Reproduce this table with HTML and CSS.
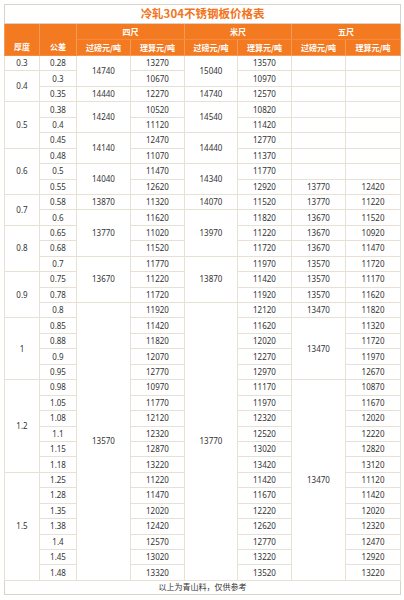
FILE: index.html
```html
<!DOCTYPE html>
<html lang="zh">
<head>
<meta charset="utf-8">
<title>冷轧304不锈钢板价格表</title>
<link rel="stylesheet" href="styles.css">
</head>
<body>
<table class="price">
<colgroup>
<col class="c-thick"><col class="c-tol"><col class="c-p"><col class="c-p"><col class="c-p2"><col class="c-p"><col class="c-p"><col class="c-p3">
</colgroup>
<thead>
<tr class="title-row"><th colspan="8" class="title">冷轧304不锈钢板价格表</th></tr>
<tr class="h1">
<th rowspan="2" class="hl">厚度</th><th rowspan="2" class="hl">公差</th>
<th colspan="2">四尺</th><th colspan="2">米尺</th><th colspan="2">五尺</th>
</tr>
<tr class="h2">
<th>过磅元/吨</th><th>理算元/吨</th><th>过磅元/吨</th><th>理算元/吨</th><th>过磅元/吨</th><th>理算元/吨</th>
</tr>
</thead>
<tbody>
<tr><td>0.3</td><td>0.28</td><td rowspan="2">14740</td><td>13270</td><td rowspan="2">15040</td><td>13570</td><td></td><td></td></tr>
<tr><td rowspan="2">0.4</td><td>0.3</td><td>10670</td><td>10970</td><td></td><td></td></tr>
<tr><td>0.35</td><td>14440</td><td>12270</td><td>14740</td><td>12570</td><td></td><td></td></tr>
<tr><td rowspan="3">0.5</td><td>0.38</td><td rowspan="2">14240</td><td>10520</td><td rowspan="2">14540</td><td>10820</td><td></td><td></td></tr>
<tr><td>0.4</td><td>11120</td><td>11420</td><td></td><td></td></tr>
<tr><td>0.45</td><td rowspan="2">14140</td><td>12470</td><td rowspan="2">14440</td><td>12770</td><td></td><td></td></tr>
<tr><td rowspan="3">0.6</td><td>0.48</td><td>11070</td><td>11370</td><td></td><td></td></tr>
<tr><td>0.5</td><td rowspan="2">14040</td><td>11470</td><td rowspan="2">14340</td><td>11770</td><td></td><td></td></tr>
<tr><td>0.55</td><td>12620</td><td>12920</td><td>13770</td><td>12420</td></tr>
<tr><td rowspan="2">0.7</td><td>0.58</td><td>13870</td><td>11320</td><td>14070</td><td>11520</td><td>13770</td><td>11220</td></tr>
<tr><td>0.6</td><td rowspan="3">13770</td><td>11620</td><td rowspan="3">13970</td><td>11820</td><td>13670</td><td>11520</td></tr>
<tr><td rowspan="3">0.8</td><td>0.65</td><td>11020</td><td>11220</td><td>13670</td><td>10920</td></tr>
<tr><td>0.68</td><td>11520</td><td>11720</td><td>13670</td><td>11470</td></tr>
<tr><td>0.7</td><td rowspan="3">13670</td><td>11770</td><td rowspan="3">13870</td><td>11970</td><td>13570</td><td>11720</td></tr>
<tr><td rowspan="3">0.9</td><td>0.75</td><td>11220</td><td>11420</td><td>13570</td><td>11170</td></tr>
<tr><td>0.78</td><td>11720</td><td>11920</td><td>13570</td><td>11620</td></tr>
<tr><td>0.8</td><td rowspan="18">13570</td><td>11920</td><td rowspan="18">13770</td><td>12120</td><td>13470</td><td>11820</td></tr>
<tr><td rowspan="4">1</td><td>0.85</td><td>11420</td><td>11620</td><td rowspan="4">13470</td><td>11320</td></tr>
<tr><td>0.88</td><td>11820</td><td>12020</td><td>11720</td></tr>
<tr><td>0.9</td><td>12070</td><td>12270</td><td>11970</td></tr>
<tr><td>0.95</td><td>12770</td><td>12970</td><td>12670</td></tr>
<tr><td rowspan="6">1.2</td><td>0.98</td><td>10970</td><td>11170</td><td rowspan="13">13470</td><td>10870</td></tr>
<tr><td>1.05</td><td>11770</td><td>11970</td><td>11670</td></tr>
<tr><td>1.08</td><td>12120</td><td>12320</td><td>12020</td></tr>
<tr><td>1.1</td><td>12320</td><td>12520</td><td>12220</td></tr>
<tr><td>1.15</td><td>12870</td><td>13020</td><td>12820</td></tr>
<tr><td>1.18</td><td>13220</td><td>13420</td><td>13120</td></tr>
<tr><td rowspan="7">1.5</td><td>1.25</td><td>11220</td><td>11420</td><td>11120</td></tr>
<tr><td>1.28</td><td>11470</td><td>11670</td><td>11420</td></tr>
<tr><td>1.35</td><td>12020</td><td>12220</td><td>12020</td></tr>
<tr><td>1.38</td><td>12420</td><td>12620</td><td>12320</td></tr>
<tr><td>1.4</td><td>12570</td><td>12770</td><td>12470</td></tr>
<tr><td>1.45</td><td>13020</td><td>13220</td><td>12920</td></tr>
<tr><td>1.48</td><td>13320</td><td>13520</td><td>13220</td></tr>
</tbody>
<tfoot>
<tr class="foot-row"><td colspan="8" class="note">以上为青山料，仅供参考</td></tr>
</tfoot>
</table>
</body>
</html>
```
FILE: styles.css
```css
html, body {
  margin: 0;
  padding: 0;
  background: #ffffff;
}
body {
  padding: 4px 0 0 4px;
  font-family: "Noto Sans", "Noto Sans CJK SC", sans-serif;
}
.price {
  border-collapse: collapse;
  table-layout: fixed;
  width: 396px;
  border: 1px solid #d9d4ca;
}
.c-thick { width: 35px; }
.c-tol { width: 37px; }
.c-p { width: 54px; }
.c-p2 { width: 53px; }
.c-p3 { width: 55px; }

.price th, .price td {
  padding: 0;
  text-align: center;
  vertical-align: middle;
  white-space: nowrap;
  overflow: hidden;
}
.title-row { height: 19px; }
.title {
  background: #ffffff;
  color: #f27420;
  font-family: "Noto Sans CJK SC", "Noto Sans", sans-serif;
  font-size: 11.5px;
  font-weight: 700;
  border: 1px solid #d9d4ca;
  line-height: 1;
}
.h1 { height: 16px; }
.h2 { height: 16px; }
.h1 th, .h2 th {
  background: #f47a21;
  color: #ffffff;
  font-family: "Noto Sans CJK SC", "Noto Sans", sans-serif;
  font-size: 8px;
  font-weight: 700;
  line-height: 1;
  border: 1px solid #f69a55;
}
.h1 th { border-bottom-color: #f68a3e; }
.h1 th.hl {
  vertical-align: bottom;
  padding-bottom: 4px;
}
.price tbody tr { height: 15.44px; }
.price tbody td {
  font-size: 8px;
  line-height: 1;
  color: #333333;
  border: 1px solid #e7e1d5;
}
.foot-row { height: 14px; }
.note {
  font-family: "Noto Sans CJK SC", "Noto Sans", sans-serif;
  font-size: 8px;
  color: #333333;
  line-height: 1;
  border: 1px solid #d9d4ca;
}
```
